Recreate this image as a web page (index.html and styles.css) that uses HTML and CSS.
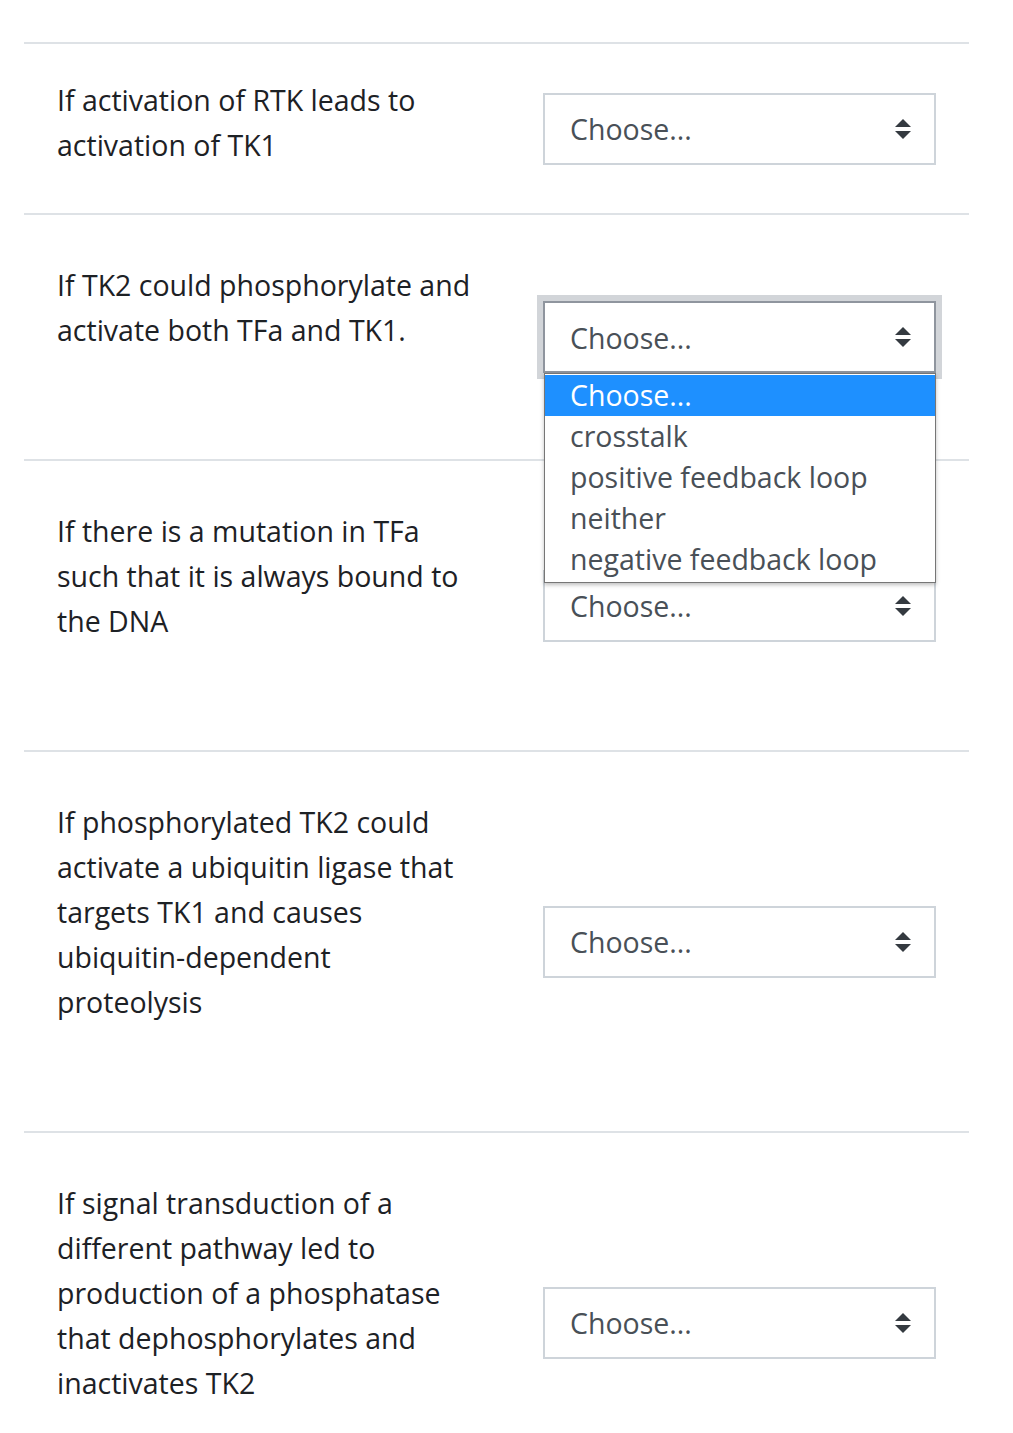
FILE: index.html
```html
<!DOCTYPE html>
<html lang="en">
<head>
<meta charset="utf-8">
<title>Match question</title>
<link rel="stylesheet" href="styles.css">
</head>
<body>
<div class="quiz">
  <div class="row row-first">
    <div class="text">If activation of RTK leads to activation of TK1</div>
    <div class="control">
      <div class="select"><span>Choose...</span><svg class="caret" viewBox="0 0 4 5" width="16" height="20"><path d="M2 0L0 2h4zm0 5L0 3h4z"/></svg></div>
    </div>
  </div>
  <div class="row">
    <div class="text">If TK2 could phosphorylate and activate both TFa and TK1.</div>
    <div class="control">
      <div class="select focused"><span>Choose...</span><svg class="caret" viewBox="0 0 4 5" width="16" height="20"><path d="M2 0L0 2h4zm0 5L0 3h4z"/></svg></div>
      <ul class="dropdown">
        <li class="active">Choose...</li>
        <li>crosstalk</li>
        <li>positive feedback loop</li>
        <li>neither</li>
        <li>negative feedback loop</li>
      </ul>
    </div>
  </div>
  <div class="row">
    <div class="text">If there is a mutation in TFa such that it is always bound to the DNA</div>
    <div class="control">
      <div class="select"><span>Choose...</span><svg class="caret" viewBox="0 0 4 5" width="16" height="20"><path d="M2 0L0 2h4zm0 5L0 3h4z"/></svg></div>
    </div>
  </div>
  <div class="row">
    <div class="text">If phosphorylated TK2 could activate a ubiquitin ligase that targets TK1 and causes ubiquitin-dependent proteolysis</div>
    <div class="control">
      <div class="select"><span>Choose...</span><svg class="caret" viewBox="0 0 4 5" width="16" height="20"><path d="M2 0L0 2h4zm0 5L0 3h4z"/></svg></div>
    </div>
  </div>
  <div class="row">
    <div class="text">If signal transduction of a different pathway led to production of a phosphatase that dephosphorylates and inactivates TK2</div>
    <div class="control">
      <div class="select"><span>Choose...</span><svg class="caret" viewBox="0 0 4 5" width="16" height="20"><path d="M2 0L0 2h4zm0 5L0 3h4z"/></svg></div>
    </div>
  </div>
</div>
</body>
</html>
```
FILE: styles.css
```css
html, body {
  margin: 0;
  padding: 0;
  background: #fff;
}
body {
  font-family: "Open Sans", "Noto Sans", sans-serif;
  font-size: 28.5px;
  line-height: 45px;
  color: #1d2125;
}
.quiz {
  padding: 42px 44px 0 24px;
}
.row {
  display: flex;
  align-items: center;
  border-top: 2px solid #dee2e6;
  padding: 0 33px;
}
.text {
  width: 418px;
  flex: none;
  padding: 47.5px 0 106.5px;
}
.row-first .text {
  padding: 33.5px 0 45.5px;
}
.control {
  position: relative;
  margin-left: auto;
  width: 393px;
  flex: none;
}
.select {
  box-sizing: border-box;
  height: 72px;
  border: 2px solid #ced4da;
  background: #fff;
  color: #495057;
  display: flex;
  align-items: center;
  justify-content: space-between;
  padding: 0 23px 0 25px;
}
.select span {
  line-height: 45px;
  padding-top: 2px;
}
.select.focused {
  border-color: #8f959e;
  box-shadow: 0 0 0 6px #d2d5d9;
}
.caret {
  display: block;
  fill: #343a40;
}
.dropdown {
  position: absolute;
  z-index: 10;
  top: 100%;
  left: 1px;
  width: 392px;
  box-sizing: border-box;
  margin: 0;
  padding: 1px 0 2px;
  list-style: none;
  background: #fff;
  border: 1px solid #767676;
  box-shadow: 0 2px 4px rgba(0, 0, 0, 0.25);
  color: #495057;
}
.dropdown li {
  height: 41px;
  line-height: 41px;
  padding-left: 25px;
  white-space: nowrap;
}
.dropdown li.active {
  background: #1e90ff;
  color: #fff;
}
```
